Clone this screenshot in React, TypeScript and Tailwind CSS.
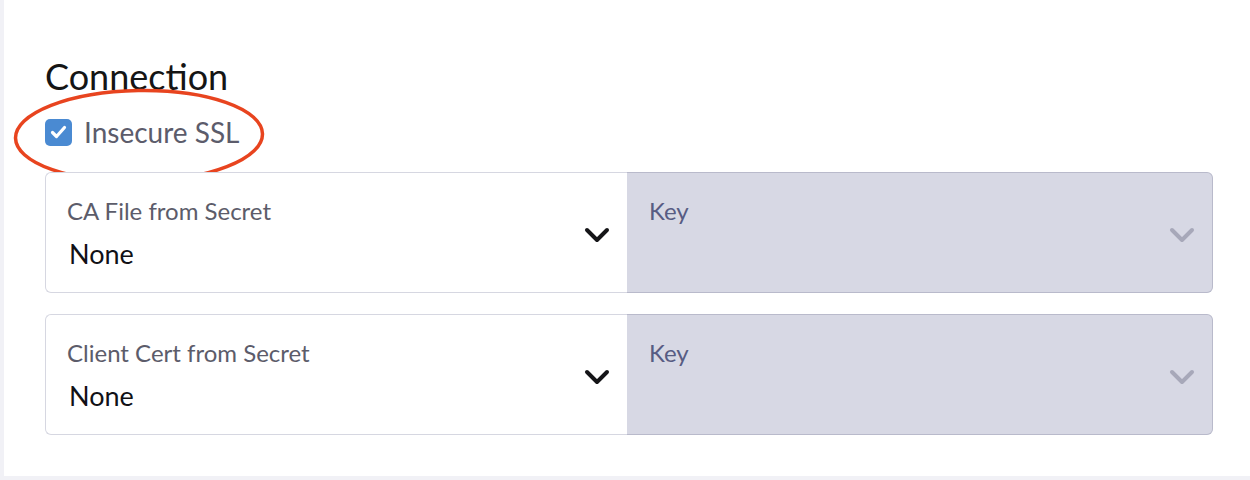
import React from "react";

const Chevron = ({ color }: { color: string }) => (
  <svg width="26" height="17" viewBox="0 0 26 17" fill="none">
    <path d="M3 3 L13 13 L23 3" stroke={color} strokeWidth="4" strokeLinecap="round" strokeLinejoin="round" />
  </svg>
);

const Row = ({ label }: { label: string }) => (
  <div className="flex h-[121px] w-[1168px]">
    <div className="relative flex-1 rounded-l-[6px] border border-r-0 border-[#d6d7e1] bg-white">
      <div className="absolute left-[21px] top-[23px] text-[24px] leading-[30px] text-[#5c5c6a]">{label}</div>
      <div className="absolute left-[23px] top-[64px] text-[27px] leading-[34px] text-[#111116]">None</div>
      <div className="absolute left-[538px] top-[54px]">
        <Chevron color="#151518" />
      </div>
    </div>
    <div className="relative w-[586px] rounded-r-[6px] border border-l-0 border-[#b9bacb] bg-[#d7d8e4]">
      <div className="absolute left-[22px] top-[23px] text-[24px] leading-[30px] text-[#575c83]">Key</div>
      <div className="absolute left-[542px] top-[54px]">
        <Chevron color="#a7a8b9" />
      </div>
    </div>
  </div>
);

export default function App() {
  return (
    <div className="h-[480px] w-[1250px] bg-[#f1f1f6] pb-[4px] pl-[4px]" style={{ fontFamily: "Lato, 'Open Sans', sans-serif" }}>
      <div className="relative h-[476px] w-full bg-white pl-[41px] pt-[58px]">
        <h2 className="text-[36px] leading-[36px] text-[#151515]">Connection</h2>
        <div className="mt-[24px] flex items-center gap-[12px]">
          <div className="flex h-[27px] w-[27px] items-center justify-center rounded-[5px] bg-[#4a8ad2]">
            <svg width="17" height="14" viewBox="0 0 17 14" fill="none">
              <path d="M2.5 7.5 L6.5 11.5 L14.5 2.5" stroke="white" strokeWidth="3.2" strokeLinecap="round" strokeLinejoin="round" />
            </svg>
          </div>
          <span className="text-[28px] leading-[28px] text-[#5c5c6b]">Insecure SSL</span>
        </div>
        <svg className="pointer-events-none absolute left-[5px] top-[86px]" width="260" height="102" viewBox="0 0 260 102">
          <ellipse cx="130" cy="50" rx="123.5" ry="45.5" fill="none" stroke="#e8441f" strokeWidth="3.5" transform="rotate(-1 130 50)" />
        </svg>
        <div className="mt-[26px] flex flex-col gap-[21px]">
          <Row label="CA File from Secret" />
          <Row label="Client Cert from Secret" />
        </div>
      </div>
    </div>
  );
}
